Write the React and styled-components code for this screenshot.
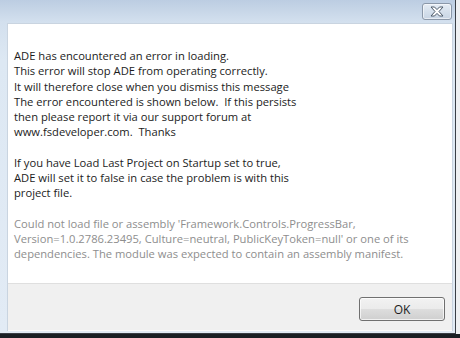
import React from "react";
import styled, { createGlobalStyle } from "styled-components";

const Global = createGlobalStyle`
  html, body {
    margin: 0;
    padding: 0;
    background: #eef0f2;
  }
  body {
    font-family: "Segoe UI", "Open Sans", "Noto Sans", sans-serif;
  }
`;

export default function App() {
  return (
    <>
      <Global />
      <Screen>
        <Window>
          <TitleBar>
            <CloseButton aria-label="Close">
              <svg width="16" height="11" viewBox="0 0 16 11">
                <path
                  d="M2 1 L5.5 1 L8 3.6 L10.5 1 L14 1 L10 5.5 L14 10 L10.5 10 L8 7.4 L5.5 10 L2 10 L6 5.5 Z"
                  fill="#ffffff"
                  stroke="#4d5a6a"
                  strokeWidth="1"
                  strokeLinejoin="round"
                />
              </svg>
            </CloseButton>
          </TitleBar>
          <Client>
            <Message>
              <Para>
                ADE has encountered an error in loading.
                <br />
                This error will stop ADE from operating correctly.
                <br />
                It will therefore close when you dismiss this message
                <br />
                The error encountered is shown below.&nbsp; If this persists
                <br />
                then please report it via our support forum at
                <br />
                www.fsdeveloper.com.&nbsp; Thanks
              </Para>
              <Para>
                If you have Load Last Project on Startup set to true,
                <br />
                ADE will set it to false in case the problem is with this
                <br />
                project file.
              </Para>
              <Para $muted>
                Could not load file or assembly 'Framework.Controls.ProgressBar,
                <br />
                Version=1.0.2786.23495, Culture=neutral, PublicKeyToken=null' or one of its
                <br />
                dependencies. The module was expected to contain an assembly manifest.
              </Para>
            </Message>
            <Footer>
              <OkButton>OK</OkButton>
            </Footer>
          </Client>
        </Window>
        <Taskbar />
      </Screen>
    </>
  );
}

const Screen = styled.div`
  width: 460px;
  height: 338px;
  overflow: hidden;
  display: flex;
  flex-direction: column;
`;

const Window = styled.div`
  width: 456px;
  height: 334px;
  box-sizing: border-box;
  display: flex;
  flex-direction: column;
  padding: 0 2px 2px 7px;
  background: linear-gradient(to bottom, #bccde2 0px, #d3e0ee 22px, #dde8f3 60px, #e2ebf5 100%);
  border-right: 1px solid #3a3f46;
  border-bottom: 1px solid #3a3f46;
`;

const TitleBar = styled.div`
  height: 23px;
  flex: none;
  display: flex;
  justify-content: flex-end;
  align-items: flex-start;
  padding-top: 3px;
  padding-right: 1px;
  box-sizing: border-box;
`;

const CloseButton = styled.button`
  width: 30px;
  height: 17px;
  padding: 0;
  display: flex;
  align-items: center;
  justify-content: center;
  border: 1px solid #8b98a9;
  border-radius: 3px;
  background: linear-gradient(to bottom, #e6edf5 0%, #d5e0ec 50%, #c8d5e4 100%);
  box-shadow: inset 0 0 0 1px rgba(255, 255, 255, 0.55);
`;

const Client = styled.div`
  flex: 1;
  display: flex;
  flex-direction: column;
  background: #ffffff;
  border: 1px solid #c9d4e0;
  border-bottom: none;
`;

const Message = styled.div`
  flex: 1;
  padding: 24px 0 0 6px;
  font-size: 11.2px;
  line-height: 15.3px;
  color: #1c1c1c;
`;

const Para = styled.p`
  margin: 0 0 15px 0;
  color: ${(p) => (p.$muted ? "#8e8e8e" : "#1c1c1c")};
`;

const Footer = styled.div`
  height: 48px;
  flex: none;
  box-sizing: border-box;
  display: flex;
  justify-content: flex-end;
  align-items: flex-start;
  padding: 13px 7px 0 0;
  background: #f0f0f0;
  border-top: 1px solid #dfdfdf;
  border-bottom: 1px solid #fafafa;
`;

const OkButton = styled.button`
  width: 86px;
  height: 24px;
  border: 1px solid #707070;
  border-radius: 3px;
  background: linear-gradient(to bottom, #f2f2f2 0%, #ebebeb 48%, #dddddd 52%, #cfcfcf 100%);
  box-shadow: inset 0 0 0 1px rgba(255, 255, 255, 0.7);
  font-family: "Segoe UI", "Open Sans", "Noto Sans", sans-serif;
  font-size: 12px;
  color: #1c1c1c;
  padding: 0;
`;

const Taskbar = styled.div`
  flex: 1;
  background: #1a1f24;
`;
